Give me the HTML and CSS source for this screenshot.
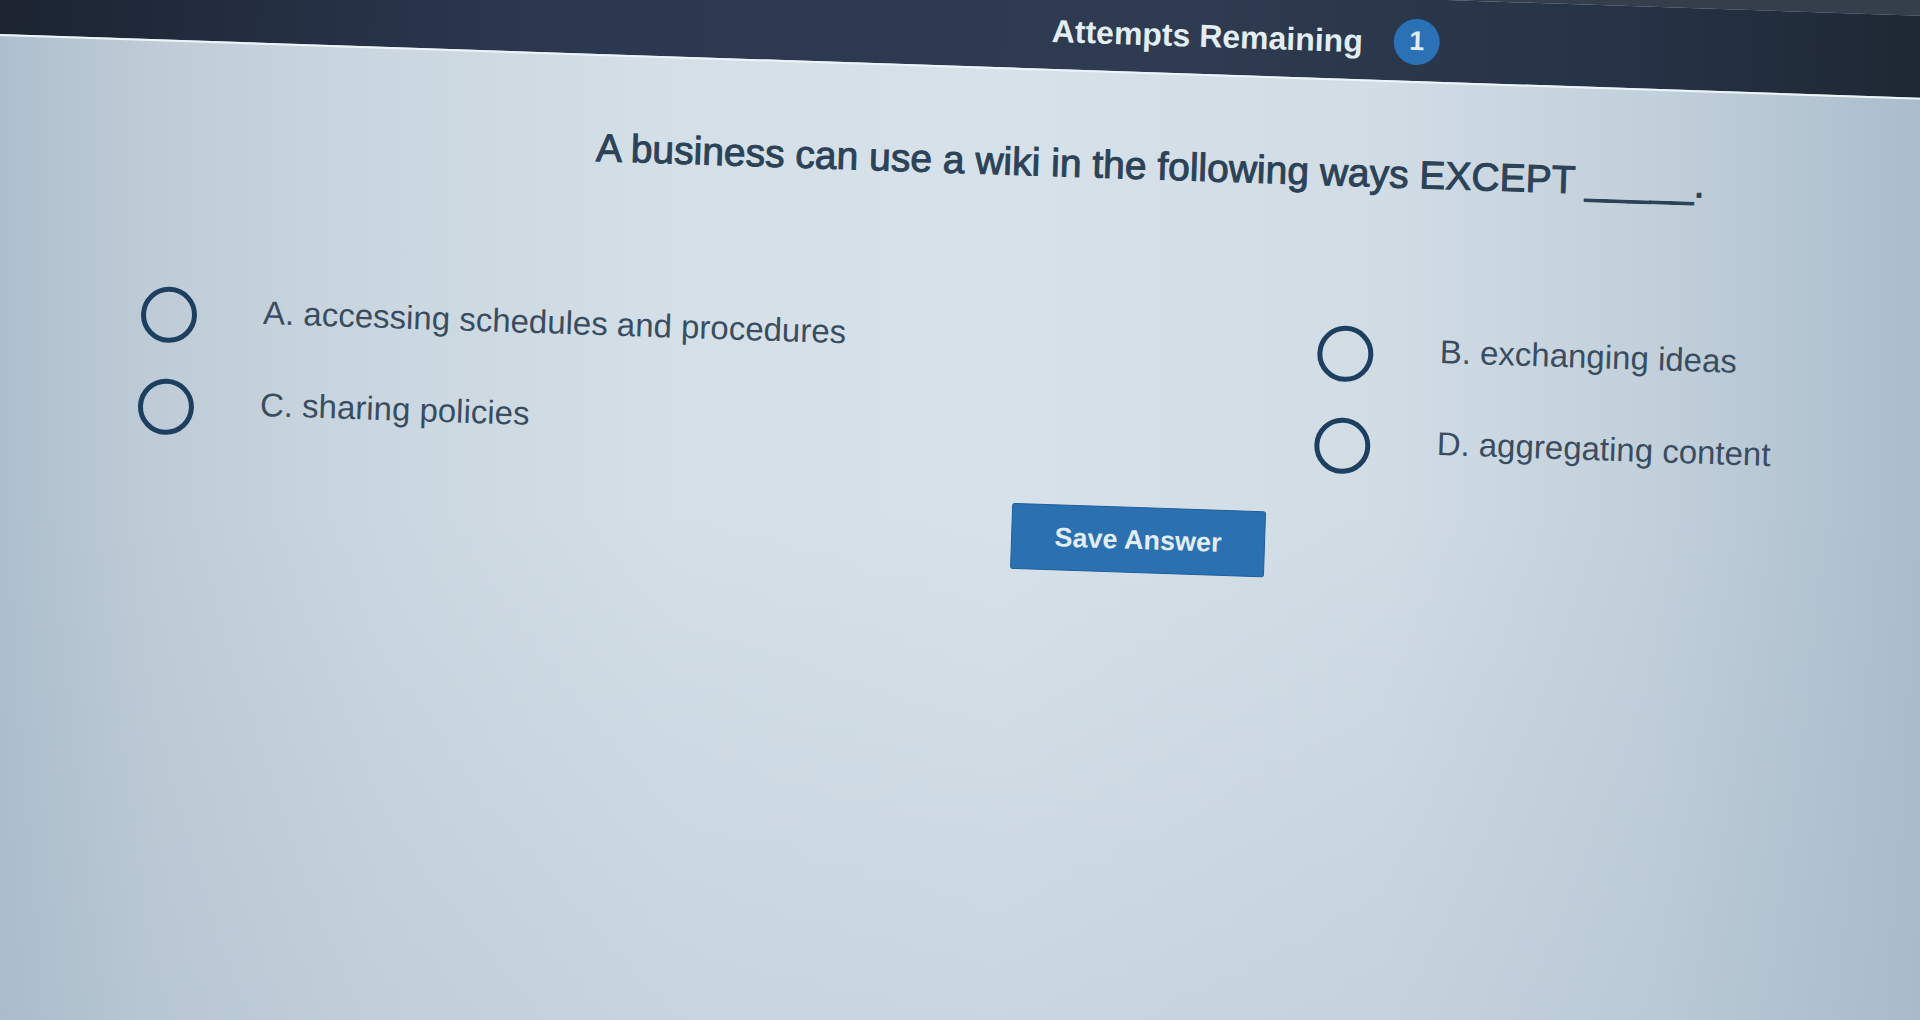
FILE: index.html
```html
<!DOCTYPE html>
<html lang="en">
<head>
    <meta charset="UTF-8">
    <meta name="viewport" content="width=device-width, initial-scale=1.0">
    <title>Quiz</title>
    <link rel="stylesheet" href="styles.css">
</head>
<body>
    <div class="screen">
        <header class="top-bar">
            <span class="attempts-label">Attempts Remaining</span>
            <span class="attempts-count">1</span>
        </header>
        <form class="quiz">
            <h1 class="question" id="question">A business can use a wiki in the following ways EXCEPT _____.</h1>
            <div class="options" role="radiogroup" aria-labelledby="question">
                <div class="option">
                    <input type="radio" name="answer" id="answer-a" value="a">
                    <label for="answer-a">A. accessing schedules and procedures</label>
                </div>
                <div class="option">
                    <input type="radio" name="answer" id="answer-b" value="b">
                    <label for="answer-b">B. exchanging ideas</label>
                </div>
                <div class="option">
                    <input type="radio" name="answer" id="answer-c" value="c">
                    <label for="answer-c">C. sharing policies</label>
                </div>
                <div class="option">
                    <input type="radio" name="answer" id="answer-d" value="d">
                    <label for="answer-d">D. aggregating content</label>
                </div>
            </div>
            <button class="save-button" type="button">Save Answer</button>
        </form>
    </div>
</body>
</html>
```
FILE: styles.css
```css
* {
    box-sizing: border-box;
}

body {
    margin: 0;
    min-height: 100vh;
    overflow: hidden;
    background:
        linear-gradient(to bottom, transparent 50%, rgba(160, 182, 198, 0.25) 100%),
        linear-gradient(to right, #adbfcd 0%, #bfccd7 8%, #cbd7e0 20%, #d4dfe7 35%, #d7e1e9 52%, #d1dce5 72%, #c2d0db 86%, #aabdcc 100%);
    color: #2c4257;
    font-family: "Liberation Sans", Arial, sans-serif;
}

/* the whole page leans slightly to the right */
.screen {
    display: flow-root;
    margin-top: -80px;
    transform: rotate(1.9deg);
    transform-origin: top left;
}

.top-bar {
    display: flex;
    align-items: center;
    justify-content: center;
    gap: 31px;
    height: 116px;
    margin-right: -8px;
    padding-top: 3px;
    padding-left: 570px;
    border-top: 32px solid #353f4b;
    border-bottom: 2px solid #edf4f8;
    background: linear-gradient(to right, #1c2431 0%, #2b3850 28%, #2e3b50 62%, #263245 85%, #1e2834 100%);
    color: #e2edf6;
    font-size: 32px;
    font-weight: bold;
}

.attempts-label {
    padding-top: 4px;
}

.attempts-count {
    display: flex;
    align-items: center;
    justify-content: center;
    width: 46px;
    height: 46px;
    border-radius: 50%;
    background: #2a71b5;
    font-size: 27px;
}

.quiz {
    display: flex;
    flex-direction: column;
    align-items: center;
    padding-top: 70px;
}

.question,
.save-button {
    margin-left: 396px;
}

.question {
    margin-top: 0;
    margin-bottom: 131px;
    font-size: 39px;
    font-weight: normal;
    line-height: 44px;
    -webkit-text-stroke: 1px #2c4257;
}

.options {
    display: grid;
    grid-template-columns: 2fr 1fr;
    row-gap: 36px;
    width: 100%;
    padding-left: 154px;
}

.option {
    display: flex;
    align-items: center;
    gap: 66px;
}

.option input {
    appearance: none;
    width: 56px;
    height: 56px;
    margin: 0;
    border: 5px solid #1d3f60;
    border-radius: 50%;
    cursor: pointer;
}

.option input:checked {
    background: #2a71b5;
}

.option label {
    padding-bottom: 10px;
    color: #3a4d60;
    font-size: 33px;
    cursor: pointer;
}

.save-button {
    width: 254px;
    height: 66px;
    margin-top: 40px;
    border: 1px solid #1f5f9e;
    border-radius: 3px;
    background: #2b70b1;
    color: #e2edf6;
    font-family: inherit;
    font-size: 27px;
    font-weight: bold;
    cursor: pointer;
}
```
